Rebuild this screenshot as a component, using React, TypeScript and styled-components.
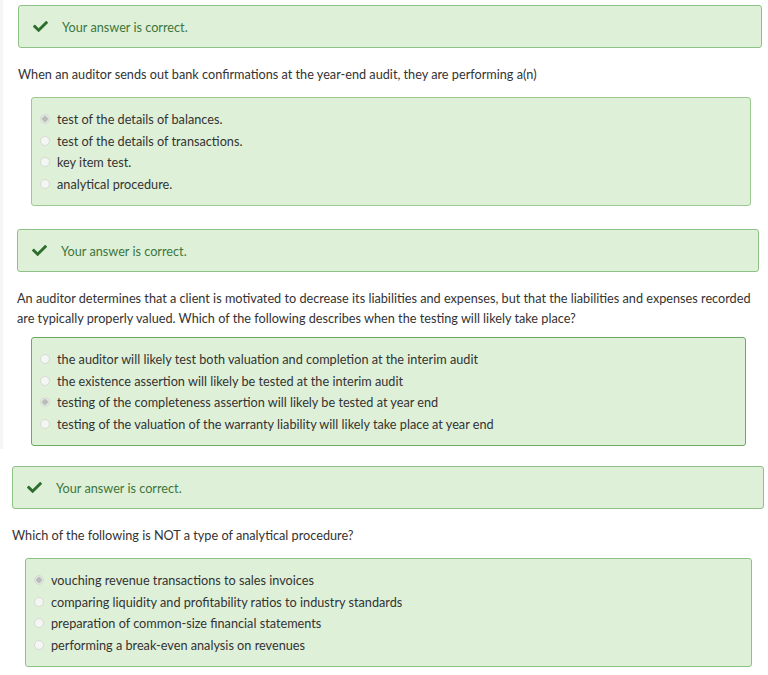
import React from 'react'
import styled, {createGlobalStyle} from 'styled-components'
import {FaCheck} from 'react-icons/fa'

type TQuestion = {
    left: number
    right: number
    top: number
    stripe: boolean
    gap: number
    answerLeft: number
    answerRight: number
    answerBorder: string
    lines: string[]
    options: string[]
    checked: number
}

const questions: TQuestion[] = [
    {
        left: 18, right: 6, top: 5, stripe: true, gap: 13, answerLeft: 13, answerRight: 11, answerBorder: '#9cc992',
        lines: ['When an auditor sends out bank confirmations at the year-end audit, they are performing a(n)'],
        options: [
            'test of the details of balances.',
            'test of the details of transactions.',
            'key item test.',
            'analytical procedure.',
        ],
        checked: 0,
    },
    {
        left: 17, right: 9, top: 20, stripe: true, gap: 9, answerLeft: 14, answerRight: 13, answerBorder: '#6fa863',
        lines: [
            'An auditor determines that a client is motivated to decrease its liabilities and expenses, but that the liabilities and expenses recorded',
            'are typically properly valued. Which of the following describes when the testing will likely take place?',
        ],
        options: [
            'the auditor will likely test both valuation and completion at the interim audit',
            'the existence assertion will likely be tested at the interim audit',
            'testing of the completeness assertion will likely be tested at year end',
            'testing of the valuation of the warranty liability will likely take place at year end',
        ],
        checked: 2,
    },
    {
        left: 12, right: 4, top: 17, stripe: false, gap: 13, answerLeft: 13, answerRight: 12, answerBorder: '#8cc283',
        lines: ['Which of the following is NOT a type of analytical procedure?'],
        options: [
            'vouching revenue transactions to sales invoices',
            'comparing liquidity and profitability ratios to industry standards',
            'preparation of common-size financial statements',
            'performing a break-even analysis on revenues',
        ],
        checked: 0,
    },
]

const GlobalStyle = createGlobalStyle`
  body {
    margin: 0;
    background: #fff;
    font-family: Lato, "Open Sans", Arial, sans-serif;
    font-size: 12.7px;
    color: #333;
  }
`

const Page = styled.div`
  display: flex;
  flex-direction: column;
  width: 768px;
`

const Section = styled.div<{ $left: number, $right: number, $top: number, $stripe: boolean }>`
  padding: ${p => p.$top}px ${p => p.$right}px 3px ${p => p.$left}px;
  background: ${p => p.$stripe ? 'linear-gradient(to right, #f5f5f5 3px, transparent 3px)' : 'none'};
`

const Alert = styled.div`
  display: flex;
  align-items: center;
  height: 41px;
  padding: 0 14px;
  background: #dff0d8;
  border: 1px solid #8fc087;
  border-radius: 3px;
  color: #3c763d;
`

const CheckIcon = styled(FaCheck)`
  width: 15px;
  height: 15px;
  color: #2d6e2d;
  margin-right: 14px;
  flex-shrink: 0;
`

const Question = styled.div<{ $gap: number }>`
  margin: 16px 0 ${p => p.$gap}px;
  line-height: 20px;
  white-space: nowrap;
  color: #333;
`

const Answers = styled.div<{ $left: number, $right: number, $border: string }>`
  margin: 0 ${p => p.$right}px 0 ${p => p.$left}px;
  padding: 10px 8px;
  background: #dff0d8;
  border: 1px solid ${p => p.$border};
  border-radius: 3px;
`

const Option = styled.div`
  display: flex;
  align-items: center;
  height: 21.75px;
  color: #333;
  white-space: nowrap;
`

const Radio = styled.span<{ $checked: boolean }>`
  box-sizing: border-box;
  width: 10px;
  height: 10px;
  border-radius: 50%;
  margin-right: 7px;
  flex-shrink: 0;
  border: 1px solid #d6dbd4;
  background: ${p => p.$checked
          ? 'radial-gradient(circle, #b9bdb8 0 2.5px, #e2e5e1 3px)'
          : '#f4f6f3'};
`

const App = () => {
    return (
        <Page>
            <GlobalStyle/>
            {questions.map((q, i) => (
                <Section key={i} $left={q.left} $right={q.right} $top={q.top} $stripe={q.stripe}>
                    <Alert>
                        <CheckIcon/>
                        <span>Your answer is correct.</span>
                    </Alert>
                    <Question $gap={q.gap}>
                        {q.lines.map((line, j) => <div key={j}>{line}</div>)}
                    </Question>
                    <Answers $left={q.answerLeft} $right={q.answerRight} $border={q.answerBorder}>
                        {q.options.map((o, j) => (
                            <Option key={j}>
                                <Radio $checked={j === q.checked}/>
                                {o}
                            </Option>
                        ))}
                    </Answers>
                </Section>
            ))}
        </Page>
    )
}

export default App
